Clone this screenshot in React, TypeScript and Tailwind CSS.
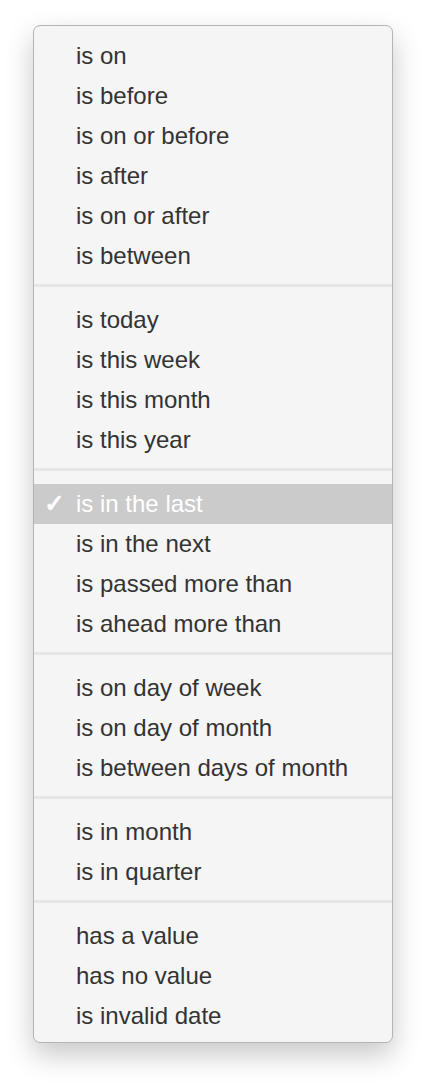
const groups: string[][] = [
  ["is on", "is before", "is on or before", "is after", "is on or after", "is between"],
  ["is today", "is this week", "is this month", "is this year"],
  ["is in the last", "is in the next", "is passed more than", "is ahead more than"],
  ["is on day of week", "is on day of month", "is between days of month"],
  ["is in month", "is in quarter"],
  ["has a value", "has no value", "is invalid date"],
];

const selected = "is in the last";

const Item = ({ label }: { label: string }) => {
  const active = label === selected;
  return (
    <div
      className={`relative flex items-center h-10 pl-[42px] text-[24px] leading-none ${
        active ? "bg-[#cbcbcb] text-white" : "text-[#333333]"
      }`}
    >
      {active && <span className="absolute left-[10px] top-[7px] text-[25px] font-bold">✓</span>}
      <span>{label}</span>
    </div>
  );
};

export default function App() {
  return (
    <div className="min-h-screen bg-white pt-[25px] pl-[33px]" style={{ fontFamily: '"Liberation Sans", Arial, sans-serif' }}>
      <div className="w-[360px] rounded-[7px] border border-[#b4b4b4] bg-[#f5f5f5] pt-[10px] pb-[6px] shadow-[0_12px_28px_rgba(0,0,0,0.22)] overflow-hidden">
        {groups.map((group, gi) => (
          <div key={gi}>
            {gi > 0 && (
              <div className="pt-2 pb-[13px]">
                <div className="h-[3px] bg-[#e6e6e6]" />
              </div>
            )}
            {group.map((label) => (
              <Item key={label} label={label} />
            ))}
          </div>
        ))}
      </div>
    </div>
  );
}
